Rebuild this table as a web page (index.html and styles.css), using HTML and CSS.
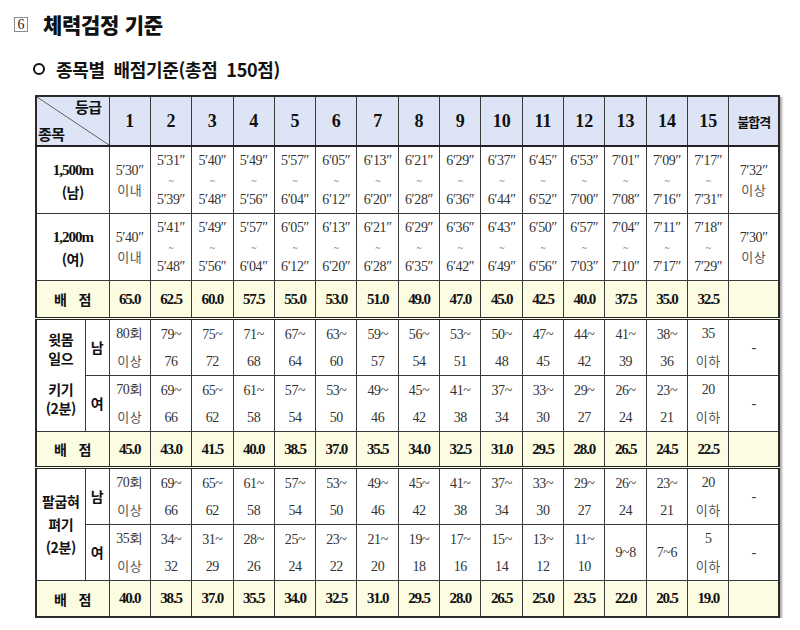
FILE: index.html
```html
<!DOCTYPE html>
<html lang="ko">
<head>
<meta charset="utf-8">
<link rel="stylesheet" href="styles.css">
</head>
<body>
<div class="page">
  <div class="title"><span class="numbox">6</span><span>체력검정 기준</span></div>
  <div class="subtitle"><span class="circle"></span><span>종목별 배점기준(총점 150점)</span></div>
  <table class="grid">
    <colgroup>
      <col class="c-a"><col class="c-b">
      <col class="c-n"><col class="c-n"><col class="c-n"><col class="c-n"><col class="c-n">
      <col class="c-n"><col class="c-n"><col class="c-n"><col class="c-n"><col class="c-n">
      <col class="c-n"><col class="c-n"><col class="c-n"><col class="c-n"><col class="c-n">
      <col class="c-f">
    </colgroup>
    <tr class="head">
      <th colspan="2" class="diag"><div class="diag-in"><span class="dg-top">등급</span><span class="dg-bot">종목</span></div></th>
      <th>1</th><th>2</th><th>3</th><th>4</th><th>5</th><th>6</th><th>7</th><th>8</th><th>9</th><th>10</th><th>11</th><th>12</th><th>13</th><th>14</th><th>15</th>
      <th class="kh">불합격</th>
    </tr>
    <tr class="run">
      <td colspan="2" class="lbl"><span class="en">1,500m</span><br>(남)</td>
      <td>5′30″<br><span class="k">이내</span></td>
      <td>5′31″<br><span class="tl">~</span><br>5′39″</td>
      <td>5′40″<br><span class="tl">~</span><br>5′48″</td>
      <td>5′49″<br><span class="tl">~</span><br>5′56″</td>
      <td>5′57″<br><span class="tl">~</span><br>6′04″</td>
      <td>6′05″<br><span class="tl">~</span><br>6′12″</td>
      <td>6′13″<br><span class="tl">~</span><br>6′20″</td>
      <td>6′21″<br><span class="tl">~</span><br>6′28″</td>
      <td>6′29″<br><span class="tl">~</span><br>6′36″</td>
      <td>6′37″<br><span class="tl">~</span><br>6′44″</td>
      <td>6′45″<br><span class="tl">~</span><br>6′52″</td>
      <td>6′53″<br><span class="tl">~</span><br>7′00″</td>
      <td>7′01″<br><span class="tl">~</span><br>7′08″</td>
      <td>7′09″<br><span class="tl">~</span><br>7′16″</td>
      <td>7′17″<br><span class="tl">~</span><br>7′31″</td>
      <td>7′32″<br><span class="k">이상</span></td>
    </tr>
    <tr class="run">
      <td colspan="2" class="lbl"><span class="en">1,200m</span><br>(여)</td>
      <td>5′40″<br><span class="k">이내</span></td>
      <td>5′41″<br><span class="tl">~</span><br>5′48″</td>
      <td>5′49″<br><span class="tl">~</span><br>5′56″</td>
      <td>5′57″<br><span class="tl">~</span><br>6′04″</td>
      <td>6′05″<br><span class="tl">~</span><br>6′12″</td>
      <td>6′13″<br><span class="tl">~</span><br>6′20″</td>
      <td>6′21″<br><span class="tl">~</span><br>6′28″</td>
      <td>6′29″<br><span class="tl">~</span><br>6′35″</td>
      <td>6′36″<br><span class="tl">~</span><br>6′42″</td>
      <td>6′43″<br><span class="tl">~</span><br>6′49″</td>
      <td>6′50″<br><span class="tl">~</span><br>6′56″</td>
      <td>6′57″<br><span class="tl">~</span><br>7′03″</td>
      <td>7′04″<br><span class="tl">~</span><br>7′10″</td>
      <td>7′11″<br><span class="tl">~</span><br>7′17″</td>
      <td>7′18″<br><span class="tl">~</span><br>7′29″</td>
      <td>7′30″<br><span class="k">이상</span></td>
    </tr>
    <tr class="score s1">
      <td colspan="2" class="slbl">배&nbsp;&nbsp;&nbsp;점</td>
      <td>65.0</td><td>62.5</td><td>60.0</td><td>57.5</td><td>55.0</td><td>53.0</td><td>51.0</td><td>49.0</td><td>47.0</td><td>45.0</td><td>42.5</td><td>40.0</td><td>37.5</td><td>35.0</td><td>32.5</td><td></td>
    </tr>
    <tr class="cnt m1">
      <td rowspan="2" class="lbl sit"><div class="sl">윗몸</div><div class="sl">일으</div><div class="sl gap">키기</div><div class="sl">(2분)</div></td>
      <td class="sex">남</td>
      <td>80회<br><span class="k">이상</span></td>
      <td>79~<br>76</td><td>75~<br>72</td><td>71~<br>68</td><td>67~<br>64</td><td>63~<br>60</td><td>59~<br>57</td><td>56~<br>54</td><td>53~<br>51</td><td>50~<br>48</td><td>47~<br>45</td><td>44~<br>42</td><td>41~<br>39</td><td>38~<br>36</td>
      <td>35<br><span class="k">이하</span></td>
      <td class="dash">-</td>
    </tr>
    <tr class="cnt f1">
      <td class="sex">여</td>
      <td>70회<br><span class="k">이상</span></td>
      <td>69~<br>66</td><td>65~<br>62</td><td>61~<br>58</td><td>57~<br>54</td><td>53~<br>50</td><td>49~<br>46</td><td>45~<br>42</td><td>41~<br>38</td><td>37~<br>34</td><td>33~<br>30</td><td>29~<br>27</td><td>26~<br>24</td><td>23~<br>21</td>
      <td>20<br><span class="k">이하</span></td>
      <td class="dash">-</td>
    </tr>
    <tr class="score s2">
      <td colspan="2" class="slbl">배&nbsp;&nbsp;&nbsp;점</td>
      <td>45.0</td><td>43.0</td><td>41.5</td><td>40.0</td><td>38.5</td><td>37.0</td><td>35.5</td><td>34.0</td><td>32.5</td><td>31.0</td><td>29.5</td><td>28.0</td><td>26.5</td><td>24.5</td><td>22.5</td><td></td>
    </tr>
    <tr class="cnt m2">
      <td rowspan="2" class="lbl push"><div class="pl">팔굽혀</div><div class="pl">펴기</div><div class="pl">(2분)</div></td>
      <td class="sex">남</td>
      <td>70회<br><span class="k">이상</span></td>
      <td>69~<br>66</td><td>65~<br>62</td><td>61~<br>58</td><td>57~<br>54</td><td>53~<br>50</td><td>49~<br>46</td><td>45~<br>42</td><td>41~<br>38</td><td>37~<br>34</td><td>33~<br>30</td><td>29~<br>27</td><td>26~<br>24</td><td>23~<br>21</td>
      <td>20<br><span class="k">이하</span></td>
      <td class="dash">-</td>
    </tr>
    <tr class="cnt f2">
      <td class="sex">여</td>
      <td>35회<br><span class="k">이상</span></td>
      <td>34~<br>32</td><td>31~<br>29</td><td>28~<br>26</td><td>25~<br>24</td><td>23~<br>22</td><td>21~<br>20</td><td>19~<br>18</td><td>17~<br>16</td><td>15~<br>14</td><td>13~<br>12</td><td>11~<br>10</td><td>9~8</td><td>7~6</td>
      <td>5<br><span class="k">이하</span></td>
      <td class="dash">-</td>
    </tr>
    <tr class="score s3">
      <td colspan="2" class="slbl">배&nbsp;&nbsp;&nbsp;점</td>
      <td>40.0</td><td>38.5</td><td>37.0</td><td>35.5</td><td>34.0</td><td>32.5</td><td>31.0</td><td>29.5</td><td>28.0</td><td>26.5</td><td>25.0</td><td>23.5</td><td>22.0</td><td>20.5</td><td>19.0</td><td></td>
    </tr>
  </table>
</div>
</body>
</html>
```
FILE: styles.css
```css
html, body {
  margin: 0;
  padding: 0;
  background: #ffffff;
}
body {
  font-family: "Noto Sans CJK KR", "Noto Sans", sans-serif;
  color: #111;
}
.page {
  padding: 9px 0 0 14px;
}
.title {
  display: flex;
  align-items: center;
  gap: 15px;
  font-size: 21px;
  font-weight: 900;
  line-height: 30px;
  letter-spacing: -0.3px;
}
.numbox {
  width: 12px;
  height: 13px;
  border: 1px solid #8a8a8a;
  font-family: "Liberation Serif", serif;
  font-weight: 400;
  font-size: 14px;
  line-height: 13px;
  text-align: center;
  color: #222;
  letter-spacing: 0;
}
.subtitle {
  display: flex;
  align-items: center;
  gap: 11px;
  margin: 18px 0 0 19px;
  font-size: 18px;
  font-weight: 700;
  line-height: 24px;
  letter-spacing: -0.3px;
  word-spacing: 4px;
}
.circle {
  width: 8px;
  height: 8px;
  border: 2px solid #111;
  border-radius: 50%;
}
.grid {
  margin: 14px 0 0 21px;
  border-collapse: collapse;
  table-layout: fixed;
  width: 743px;
  border: 2px solid #2a2a2a;
  box-shadow: 2px 2px 2px rgba(0, 0, 0, 0.35);
}
.c-a { width: 49px; }
.c-b { width: 24px; }
.c-n { width: 41.33px; }
.c-f { width: 50px; }
.grid th, .grid td {
  border: 1px solid #3a3a3a;
  padding: 0;
  text-align: center;
  vertical-align: middle;
}
.grid td {
  font-family: "Liberation Serif", serif;
  font-size: 14px;
  color: #333;
  letter-spacing: -0.4px;
}
.head th {
  height: 48px;
  background: #dce4f6;
  font-family: "Liberation Serif", serif;
  font-weight: 700;
  font-size: 18px;
  color: #111;
  border-bottom: 2px solid #222;
}
.head th.kh {
  font-family: "Noto Sans CJK KR", sans-serif;
  font-size: 13px;
  letter-spacing: -1px;
}
.head th.diag {
  background-color: #dce4f6;
  background-image: linear-gradient(to top right, transparent calc(50% - 0.7px), #444 50%, transparent calc(50% + 0.7px));
}
.diag-in {
  display: flex;
  flex-direction: column;
  justify-content: space-between;
  height: 48px;
  font-family: "Noto Sans CJK KR", sans-serif;
  font-size: 15px;
  line-height: 20px;
  letter-spacing: -0.5px;
}
.dg-top {
  align-self: flex-end;
  padding: 0 7px 0 0;
}
.dg-bot {
  align-self: flex-start;
  padding: 0 0 1px 1px;
}
.run td {
  height: 66px;
  line-height: 19px;
}
.grid td .tl {
  font-size: 10px;
  color: #666;
  line-height: 19px;
}
.grid td .k {
  font-family: "Noto Sans CJK KR", sans-serif;
  font-size: 13px;
  color: #555;
  letter-spacing: 0.5px;
}
.grid td.lbl {
  font-family: "Noto Sans CJK KR", sans-serif;
  font-weight: 700;
  font-size: 14px;
  color: #111;
  line-height: 22px;
}
.grid td.lbl .en {
  font-family: "Liberation Serif", serif;
  font-size: 15px;
  letter-spacing: -1px;
}
.score td {
  background: #fcfce3;
  font-weight: 700;
  font-size: 15px;
  letter-spacing: -1.2px;
  color: #111;
  border-bottom: 3px double #222;
}
.s1 td { height: 36px; }
.s2 td { height: 34px; }
.s3 td { height: 35px; border-bottom: 2px solid #2a2a2a; }
.grid td.slbl {
  font-family: "Noto Sans CJK KR", sans-serif;
  font-size: 14px;
  letter-spacing: 0;
}
.cnt td {
  line-height: 27px;
}
.m1 td { height: 53px; }
.f1 td { height: 55px; }
.m2 td { height: 53px; }
.f2 td { height: 54px; }
.grid td.sex {
  font-family: "Noto Sans CJK KR", sans-serif;
  font-weight: 700;
  font-size: 14px;
  color: #111;
}
.grid td.dash {
  color: #333;
}
.sit .sl {
  line-height: 19px;
}
.sit .gap {
  margin-top: 12px;
}
.sit {
  padding-bottom: 4px !important;
}
.push .pl {
  line-height: 23px;
}
```
